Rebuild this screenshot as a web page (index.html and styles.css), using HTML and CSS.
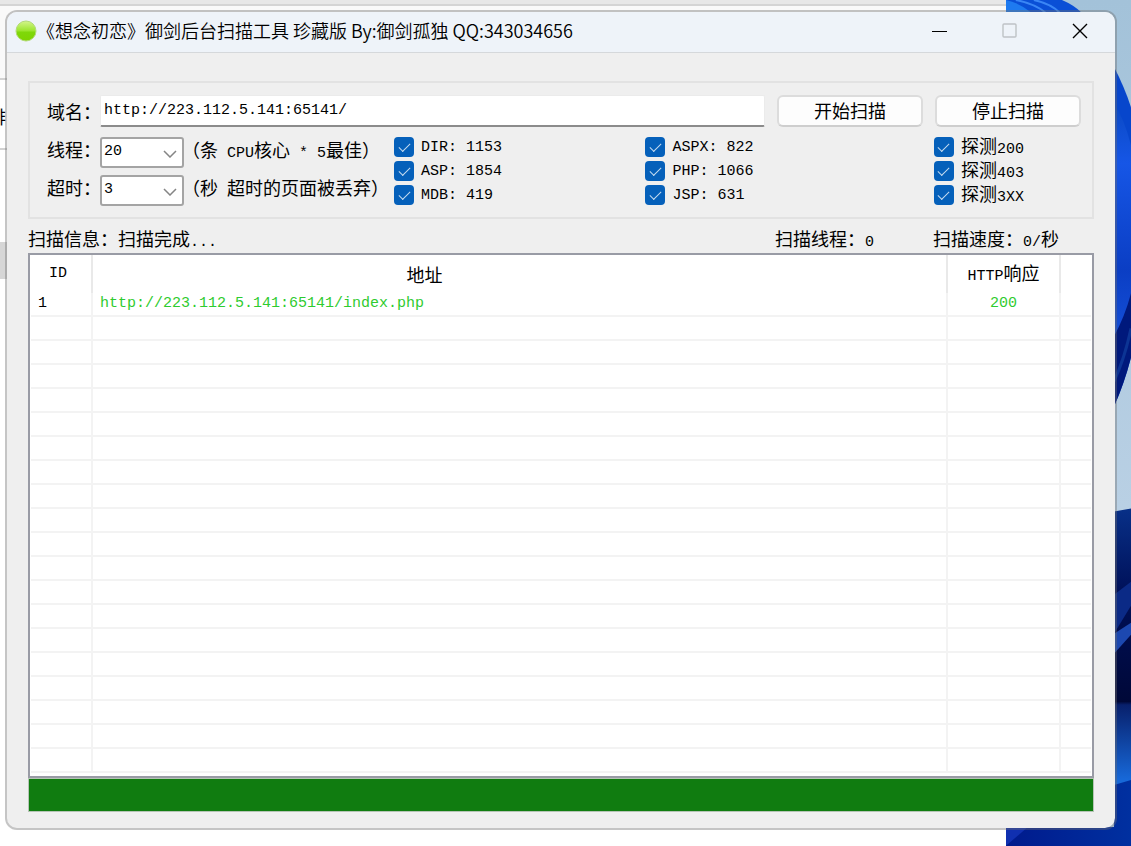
FILE: index.html
```html
<!DOCTYPE html>
<html lang="zh-CN">
  <head>
    <meta charset="utf-8">
    <title>御剑后台扫描工具</title>
    <link rel="stylesheet" href="styles.css">
  </head>
  <body>
    <div class="behind">
      <div class="behind-top"></div>
      <div class="behind-bar"></div>
      <div class="behind-row"><span>排</span></div>
      <div class="behind-list"></div>
      <div class="behind-sel"></div>
    </div>
    <svg class="wallpaper" viewBox="0 0 125 846" preserveAspectRatio="xMaxYMin slice" aria-hidden="true">
      <defs>
        <linearGradient id="sky" x1="0" y1="0" x2="0" y2="1">
          <stop offset="0" stop-color="#a3c2d9"/>
          <stop offset="0.6" stop-color="#b9d0e4"/>
        </linearGradient>
        <linearGradient id="petal" x1="0" y1="0" x2="0" y2="1">
          <stop offset="0" stop-color="#0a49c4"/>
          <stop offset="0.25" stop-color="#1656e6"/>
          <stop offset="0.7" stop-color="#0b3ec4"/>
          <stop offset="1" stop-color="#1550d8"/>
        </linearGradient>
        <linearGradient id="deep" x1="0" y1="0" x2="0" y2="1">
          <stop offset="0" stop-color="#083088"/>
          <stop offset="0.25" stop-color="#001058"/>
          <stop offset="0.57" stop-color="#000838"/>
          <stop offset="0.58" stop-color="#08206c"/>
          <stop offset="0.8" stop-color="#1768d8"/>
        </linearGradient>
        <linearGradient id="foot" x1="0" y1="0" x2="1" y2="0">
          <stop offset="0" stop-color="#001a8c"/>
          <stop offset="1" stop-color="#0030a0"/>
        </linearGradient>
      </defs>
      <rect width="125" height="846" fill="url(#sky)"/>
      <path d="M0 0H56Q68 5 76 13H0z" fill="#0a4fd6"/>
      <path d="M0 0Q14 3 26 13H0z" fill="#1e7af0"/>
      <path d="M10 0Q30 4 40 13M28 0Q46 4 54 13" stroke="#3a86f5" stroke-width="2" fill="none"/>
      <path d="M108 67Q118 86 125 107V357Q118 384 108 406z" fill="#0746cc"/>
      <path d="M108 104Q118 118 125 145V298Q120 318 108 340z" fill="url(#petal)"/>
      <path d="M108 336Q119 316 125 293V357Q118 384 108 406z" fill="#00197c"/>
      <path d="M108 381Q119 357 125 328" stroke="#0c3494" stroke-width="3" fill="none"/>
      <path d="M108 511L125 508V846H108z" fill="url(#deep)"/>
      <path d="M108 594L125 581V605L108 633z" fill="#0b2a86"/>
      <path d="M108 633L125 622V634L108 653z" fill="#1c48b0"/>
      <path d="M108 784L125 779V846H0V826H108z" fill="url(#foot)"/>
      <path d="M22 826L0 845V826z" fill="#1030b0"/>
    </svg>
    <main class="window">
      <header class="titlebar">
        <svg class="app-icon" viewBox="0 0 22 22" aria-hidden="true">
          <defs>
            <linearGradient id="ball" x1="0" y1="0" x2="0" y2="1">
              <stop offset="0" stop-color="#d4f58c"/>
              <stop offset="0.5" stop-color="#9ae52c"/>
              <stop offset="0.55" stop-color="#7fd80a"/>
              <stop offset="1" stop-color="#7ed300"/>
            </linearGradient>
          </defs>
          <circle cx="11" cy="11" r="10" fill="url(#ball)" stroke="#b2da78" stroke-width="1"/>
        </svg>
        <h1>《想念初恋》御剑后台扫描工具 珍藏版 By:御剑孤独 QQ:343034656</h1>
        <div class="controls">
          <button type="button" aria-label="最小化"><svg width="16" height="16"><path d="M0 8.5H15" stroke="#000"/></svg></button>
          <button type="button" aria-label="最大化" disabled><svg width="16" height="16"><rect x="1" y="1" width="13" height="13" rx="1" fill="none" stroke="#bec2c6" stroke-width="1.4"/></svg></button>
          <button type="button" aria-label="关闭"><svg width="16" height="16"><path d="M1 1L15 15M15 1L1 15" stroke="#000" stroke-width="1.4"/></svg></button>
        </div>
      </header>
      <div class="content">
        <form class="group">
          <div class="target">
            <label for="domain">域名：</label>
            <input class="mono" type="text" id="domain" value="http://223.112.5.141:65141/">
            <button type="button">开始扫描</button>
            <button type="button">停止扫描</button>
          </div>
          <div class="settings">
            <div class="limits">
              <div class="limit">
                <label for="threads">线程：</label>
                <select class="mono" id="threads"><option>20</option></select>
                <span>（条<span class="mono"> CPU</span>核心<span class="mono"> * 5</span>最佳）</span>
              </div>
              <div class="limit">
                <label for="timeout">超时：</label>
                <select class="mono" id="timeout"><option>3</option></select>
                <span>（秒<span class="mono"> </span>超时的页面被丢弃）</span>
              </div>
            </div>
            <div class="checks">
              <label><input type="checkbox" checked><span class="mono">DIR: 1153</span></label>
              <label><input type="checkbox" checked><span class="mono">ASP: 1854</span></label>
              <label><input type="checkbox" checked><span class="mono">MDB: 419</span></label>
            </div>
            <div class="checks">
              <label><input type="checkbox" checked><span class="mono">ASPX: 822</span></label>
              <label><input type="checkbox" checked><span class="mono">PHP: 1066</span></label>
              <label><input type="checkbox" checked><span class="mono">JSP: 631</span></label>
            </div>
            <div class="checks">
              <label><input type="checkbox" checked><span>探测<span class="mono">200</span></span></label>
              <label><input type="checkbox" checked><span>探测<span class="mono">403</span></span></label>
              <label><input type="checkbox" checked><span>探测<span class="mono">3XX</span></span></label>
            </div>
          </div>
        </form>
        <div class="status">
          <span>扫描信息：扫描完成<span class="mono">...</span></span>
          <span>扫描线程：<span class="mono">0</span></span>
          <span>扫描速度：<span class="mono">0/</span>秒</span>
        </div>
        <div class="list">
          <table>
            <thead>
              <tr><th class="id mono">ID</th><th class="address">地址</th><th class="code"><span class="mono">HTTP</span>响应</th><th class="rest"></th></tr>
            </thead>
            <tbody class="mono">
              <tr><td>1</td><td class="hit">http://223.112.5.141:65141/index.php</td><td class="hit center">200</td><td></td></tr>
              <tr><td></td><td></td><td></td><td></td></tr>
              <tr><td></td><td></td><td></td><td></td></tr>
              <tr><td></td><td></td><td></td><td></td></tr>
              <tr><td></td><td></td><td></td><td></td></tr>
              <tr><td></td><td></td><td></td><td></td></tr>
              <tr><td></td><td></td><td></td><td></td></tr>
              <tr><td></td><td></td><td></td><td></td></tr>
              <tr><td></td><td></td><td></td><td></td></tr>
              <tr><td></td><td></td><td></td><td></td></tr>
              <tr><td></td><td></td><td></td><td></td></tr>
              <tr><td></td><td></td><td></td><td></td></tr>
              <tr><td></td><td></td><td></td><td></td></tr>
              <tr><td></td><td></td><td></td><td></td></tr>
              <tr><td></td><td></td><td></td><td></td></tr>
              <tr><td></td><td></td><td></td><td></td></tr>
              <tr><td></td><td></td><td></td><td></td></tr>
              <tr><td></td><td></td><td></td><td></td></tr>
              <tr><td></td><td></td><td></td><td></td></tr>
              <tr><td></td><td></td><td></td><td></td></tr>
            </tbody>
          </table>
        </div>
        <progress value="100" max="100" aria-label="扫描进度"></progress>
      </div>
    </main>
  </body>
</html>
```
FILE: styles.css
```css
* { box-sizing: border-box; }
html { height: 100%; }
body {
  position: relative;
  min-height: 100%;
  margin: 0;
  padding: 10px 14px 17px 5px;
  overflow: hidden;
  background: #fff;
  color: #000;
  font-family: "Noto Sans CJK SC", sans-serif;
  font-size: 18px;
  line-height: 24px;
}
button, input, select {
  margin: 0;
  color: inherit;
  font: inherit;
}
.mono {
  font-family: "Liberation Mono", "Noto Sans CJK SC", monospace;
  font-size: 15px;
  white-space: pre;
}

/* desktop */
.behind {
  position: absolute;
  inset: 0;
}
.behind-top {
  height: 6px;
  background: #e7e7e7;
  border-bottom: 2px solid #d4d4d4;
}
.behind-bar {
  height: 74px;
  background: #f9f9f9;
  border-bottom: 2px solid #d2d2d2;
}
.behind-row {
  height: 70px;
  padding-top: 24px;
  border-bottom: 2px solid #d2d2d2;
}
.behind-row span {
  margin-left: -12px;
}
.behind-list { height: 92px; }
.behind-sel {
  height: 37px;
  background: #d6d6d6;
}
.wallpaper {
  position: absolute;
  top: 0;
  right: 0;
  width: 125px;
  height: 100%;
}

.window {
  position: relative;
  border: 2px solid rgba(110, 110, 110, 0.4);
  border-radius: 12px;
  background: #efefef;
  background-clip: padding-box;
}
.titlebar {
  display: flex;
  align-items: center;
  height: 41px;
  padding: 0 0 2px 8px;
  border-bottom: 1px solid #d5d8db;
  border-radius: 10px 10px 0 0;
  background: #eef3f9;
}
.app-icon {
  width: 22px;
  height: 22px;
}
.titlebar h1 {
  flex: 1;
  margin: 0;
  padding-bottom: 2px;
  font-size: 18px;
  font-weight: 350;
}
.controls { display: flex; }
.controls button {
  display: flex;
  align-items: center;
  justify-content: center;
  width: 70px;
  height: 38px;
  padding: 0;
  border: 0;
  background: none;
}

.content { padding: 28px 21px 16px; }
.group {
  padding: 12px 11px 10px 17px;
  border: 2px solid #e2e2e2;
}
.target {
  display: flex;
  align-items: center;
}
.target label, .limit label {
  width: 53px;
  white-space: nowrap;
}
.target input {
  flex: 1;
  min-width: 0;
  height: 32px;
  padding: 0 3px;
  border: 1px solid #ebebeb;
  border-bottom: 2px solid #8b8b8b;
  border-radius: 2px;
  background: #fff;
}
.target button {
  width: 146px;
  height: 32px;
  margin-left: 12px;
  padding: 0 0 2px;
  border: 2px solid #dcdcdc;
  border-bottom-color: #cecece;
  border-radius: 6px;
  background: #fdfdfd;
}
.settings {
  display: grid;
  grid-template-columns: 347px 251fr 288fr 147px;
  padding-top: 8px;
}
.limits {
  display: grid;
  gap: 6px;
  padding-top: 2px;
}
.limit {
  display: flex;
  height: 31px;
  white-space: nowrap;
}
.limit select {
  width: 84px;
  height: 31px;
  margin-right: -2px;
  padding: 0 3px 1px 2px;
  border: 2px solid #a4a4a4;
  border-radius: 3px;
  background: #fff url("data:image/svg+xml,%3Csvg xmlns='http://www.w3.org/2000/svg' width='14' height='8'%3E%3Cpath d='M1 1L7 7L13 1' fill='none' stroke='%23858585' stroke-width='1.5'/%3E%3C/svg%3E") no-repeat right 5px top 11px;
  appearance: none;
}
.checks label {
  display: flex;
  align-items: center;
  height: 24px;
  line-height: 20px;
}
.checks label > .mono { padding-top: 2px; }
.checks input {
  display: grid;
  place-items: center;
  width: 20px;
  height: 20px;
  margin-right: 7px;
  border-radius: 4px;
  background: #0560ba;
  appearance: none;
}
.checks input:checked::after {
  content: "";
  width: 10px;
  height: 5px;
  margin-bottom: 3px;
  border: solid #c5dbf0;
  border-width: 0 0 1px 1px;
  transform: rotate(-45deg);
}

.status {
  display: grid;
  grid-template-columns: 1fr 158px 161px;
  height: 34px;
  padding-top: 9px;
  line-height: 20px;
}
.list {
  height: 525px;
  padding: 0 1px;
  border: 2px solid #999ba5;
  background: #fff;
}
table {
  width: 100%;
  table-layout: fixed;
  border-spacing: 0;
}
th, td {
  padding: 0;
  border-right: 2px solid #f3f3f3;
}
th {
  height: 38px;
  border-color: #e9e9e9;
  font-weight: 400;
  line-height: 20px;
}
td {
  height: 24px;
  padding: 0 7px;
  border-bottom: 2px solid #f3f3f3;
  line-height: 22px;
}
th:last-child, td:last-child { border-right: 0; }
.id {
  width: 62px;
  padding-right: 6px;
}
.address { padding-right: 190px; }
.code { width: 113px; }
.rest { width: 30px; }
.hit { color: #2fcb2f; }
.center { text-align: center; }

progress {
  display: block;
  width: 100%;
  height: 34px;
  border: 1px solid #b5c4b5;
  appearance: none;
}
progress::-webkit-progress-bar { background: #e6e6e6; }
progress::-webkit-progress-value { background: #107c10; }
```
